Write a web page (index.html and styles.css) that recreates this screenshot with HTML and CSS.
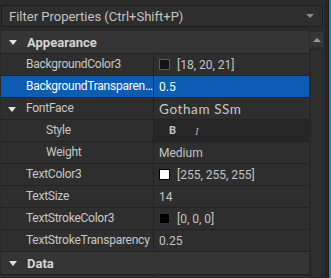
FILE: index.html
```html
<!DOCTYPE html>
<html>
<head>
    <link rel="stylesheet" href="styles.css">
</head>
<body>
    <div class="app">
        <div class="main">
            <div class="topstrip"></div>
            <div class="filter">
                <span class="filter-text">Filter Properties (Ctrl+Shift+P)</span>
                <span class="filter-arrow"></span>
            </div>
            <div class="panel">
                <div class="props">
                    <div class="group">
                        <span class="tri"></span>
                        <span class="group-name">Appearance</span>
                    </div>
                    <div class="row">
                        <div class="name">BackgroundColor3</div>
                        <div class="value"><span class="swatch swatch-dark"></span>[18, 20, 21]</div>
                    </div>
                    <div class="row selected">
                        <div class="name">BackgroundTransparency</div>
                        <div class="value">0.5</div>
                    </div>
                    <div class="row">
                        <div class="name"><span class="tri tri-small"></span>FontFace</div>
                        <div class="value value-font">Gotham SSm</div>
                    </div>
                    <div class="row">
                        <div class="name sub">Style</div>
                        <div class="value value-style"><span class="bold">B</span><span class="italic">I</span></div>
                    </div>
                    <div class="row">
                        <div class="name sub">Weight</div>
                        <div class="value">Medium</div>
                    </div>
                    <div class="row">
                        <div class="name">TextColor3</div>
                        <div class="value"><span class="swatch swatch-white"></span>[255, 255, 255]</div>
                    </div>
                    <div class="row">
                        <div class="name">TextSize</div>
                        <div class="value">14</div>
                    </div>
                    <div class="row">
                        <div class="name">TextStrokeColor3</div>
                        <div class="value"><span class="swatch swatch-black"></span>[0, 0, 0]</div>
                    </div>
                    <div class="row">
                        <div class="name">TextStrokeTransparency</div>
                        <div class="value">0.25</div>
                    </div>
                    <div class="group">
                        <span class="tri"></span>
                        <span class="group-name">Data</span>
                    </div>
                    <div class="row">
                        <div class="name"></div>
                        <div class="value"></div>
                    </div>
                </div>
                <div class="scrollbar">
                    <div class="scroll-up"><span class="up-arrow"></span></div>
                    <div class="scroll-track"></div>
                </div>
            </div>
        </div>
        <div class="edge"></div>
        <div class="accent"></div>
    </div>
</body>
</html>
```

FILE: styles.css
```css
body {
    margin: 0;
    padding: 0;
    background-color: #2a2a2a;
    font-family: Roboto, "Noto Sans", sans-serif;
    color: #cccccc;
    overflow: hidden;
}

.app {
    display: flex;
    width: 331px;
    height: 278px;
}

.main {
    width: 324px;
    display: flex;
    flex-direction: column;
}

.topstrip {
    height: 5px;
}

.filter {
    margin-left: 1px;
    height: 20px;
    border: 1px solid #1c1c1c;
    background-color: #2e2e2e;
    display: flex;
    align-items: center;
    justify-content: space-between;
    padding-left: 7px;
    padding-right: 8px;
}

.filter-text {
    font-size: 13px;
    color: #c4c4c4;
}

.filter-arrow {
    width: 0;
    height: 0;
    border-left: 4px solid transparent;
    border-right: 4px solid transparent;
    border-top: 4px solid #8a8a8a;
}

.panel {
    margin-top: 4px;
    display: flex;
    flex: 1;
    overflow: hidden;
}

.props {
    margin-left: 1px;
    width: 308px;
}

.group {
    height: 22px;
    background-color: #353535;
    border-bottom: 1px solid #222222;
    display: flex;
    align-items: center;
    padding-left: 8px;
}

.group-name {
    margin-left: 10px;
    font-weight: bold;
    font-size: 13px;
    color: #d4d4d4;
}

.tri {
    width: 0;
    height: 0;
    border-left: 4px solid transparent;
    border-right: 4px solid transparent;
    border-top: 5px solid #e0e0e0;
}

.tri-small {
    position: absolute;
    left: 7px;
    top: 9px;
}

.row {
    display: grid;
    grid-template-columns: 153px 1fr;
    height: 21px;
    border-bottom: 1px solid #222222;
    background-color: #2e2e2e;
    font-size: 12px;
}

.name {
    position: relative;
    border-right: 1px solid #222222;
    padding-left: 25px;
    white-space: nowrap;
    overflow: hidden;
    text-overflow: ellipsis;
    line-height: 21px;
    letter-spacing: -0.25px;
    color: #c8c8c8;
}

.sub {
    padding-left: 45px;
}

.value {
    display: flex;
    align-items: center;
    padding-left: 5px;
    color: #c4c4c4;
}

.selected {
    background-color: #0b5cb3;
}

.selected .name,
.selected .value {
    color: #ffffff;
}

.value-font {
    font-family: "Lato", sans-serif;
    font-size: 13.5px;
    letter-spacing: 0.6px;
    color: #c8c8c8;
}

.value-style {
    background-color: #262626;
    font-size: 11px;
}

.bold {
    font-weight: bold;
    margin-left: 10px;
}

.italic {
    font-style: italic;
    font-family: "Liberation Serif", serif;
    margin-left: 19px;
    color: #aaaaaa;
}

.swatch {
    width: 9px;
    height: 9px;
    margin-right: 7px;
    border: 1px solid #5a5a5a;
}

.swatch-dark {
    background-color: #121415;
}

.swatch-white {
    background-color: #ffffff;
    border-color: #000000;
}

.swatch-black {
    background-color: #000000;
    border-color: #333333;
}

.scrollbar {
    width: 13px;
    margin-left: 1px;
    display: flex;
    flex-direction: column;
}

.scroll-up {
    height: 15px;
    margin-top: 1px;
    background-color: #353535;
    display: flex;
    align-items: center;
    justify-content: center;
}

.up-arrow {
    width: 0;
    height: 0;
    border-left: 4px solid transparent;
    border-right: 4px solid transparent;
    border-bottom: 4px solid #9a9a9a;
}

.scroll-track {
    flex: 1;
    margin-top: 2px;
    background-color: #2f2f2f;
    border: 1px solid #242424;
}

.edge {
    width: 5px;
    background-color: #252525;
    border-left: 1px solid #333333;
}

.accent {
    width: 2px;
    background-color: #0e82d4;
}
```
